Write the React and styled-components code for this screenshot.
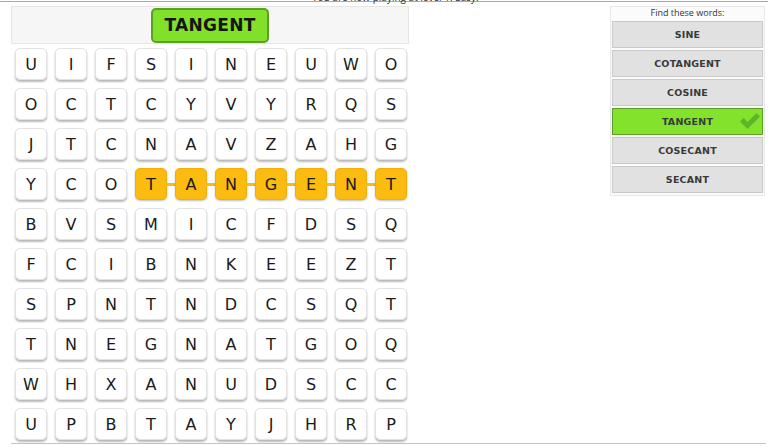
import React from "react";
import styled, { createGlobalStyle, css } from "styled-components";

const GlobalStyle = createGlobalStyle`
   html, body {
      margin: 0;
      padding: 0;
      background: #fff;
      overflow: hidden;
   }
   body {
      font-family: "Comic Sans MS", "DejaVu Sans", sans-serif;
   }
`;

const Page = styled.div`
   width: 768px;
   height: 447px;
   position: relative;
   overflow: hidden;
`;

const StatusLine = styled.div`
   margin-top: -8px;
   height: 9px;
   border-bottom: 1px solid #a9a9a9;
   font-family: "Open Sans", "DejaVu Sans", sans-serif;
   font-size: 10px;
   line-height: 10px;
   color: #333;
   padding-left: 312px;
`;

const Main = styled.div`
   display: flex;
   align-items: flex-start;
   padding: 4px 1px 0 0;
   margin: 0 2px 0 11px;
   height: 437px;
   border-bottom: 1px solid #c4c4bc;
`;

const Board = styled.div`
   width: 398px;
   display: flex;
   flex-direction: column;
`;

const Header = styled.div`
   height: 36px;
   background: #f6f6f6;
   border: 1px solid #e6e6e6;
   display: flex;
   justify-content: center;
   align-items: center;
`;

const FoundLabel = styled.div`
   width: 118px;
   height: 35px;
   box-sizing: border-box;
   background: #83e02a;
   border: 2px solid #58a122;
   border-radius: 5px;
   display: flex;
   align-items: center;
   justify-content: center;
   font-size: 17px;
   font-weight: bold;
   color: #151515;
   letter-spacing: 0.3px;
`;

const Grid = styled.div`
   display: grid;
   grid-template-columns: repeat(10, 32px);
   grid-auto-rows: 32px;
   gap: 8px;
   margin: 4px 0 0 4px;
`;

const Tile = styled.div`
   position: relative;
   box-sizing: border-box;
   border-radius: 5px;
   display: flex;
   align-items: center;
   justify-content: center;
   font-size: 16px;
   color: #1a1a1a;
   background: #fff;
   border: 1px solid #e2e2e2;
   box-shadow: 0 2px 2px rgba(0, 0, 0, 0.28);

   ${props => props.$hit && css`
      background: #fbbb10;
      border-color: #f2ad08;
      box-shadow: 0 1px 2px rgba(0, 0, 0, 0.25);
   `}

   ${props => props.$link && css`
      &::after {
         content: "";
         position: absolute;
         right: -10px;
         top: 14px;
         width: 10px;
         height: 3px;
         background: #fbbb10;
      }
   `}
`;

const Panel = styled.div`
   margin-left: auto;
   margin-top: 0;
   width: 151px;
   padding: 0 1px 2px 1px;
   background: #fbfbfb;
   border: 1px solid #e8e8e8;
   display: flex;
   flex-direction: column;
   gap: 2px;
`;

const PanelTitle = styled.div`
   font-family: "Open Sans", "DejaVu Sans", sans-serif;
   font-size: 9px;
   line-height: 12px;
   color: #333;
   text-align: center;
`;

const Word = styled.div`
   position: relative;
   height: 25px;
   background: ${props => (props.$found ? "#83e22c" : "#e1e1e1")};
   border: 1px solid ${props => (props.$found ? "#5e9e28" : "#c9c9c9")};
   display: flex;
   align-items: center;
   justify-content: center;
   font-family: "DejaVu Sans", sans-serif;
   font-size: 9.5px;
   font-weight: bold;
   color: #3a3a3a;
   letter-spacing: 0.2px;
`;

const Check = styled.svg`
   position: absolute;
   right: 1px;
   top: 3px;
   width: 22px;
   height: 18px;
`;

const rows = [
   "UIFSINEUWO",
   "OCTCYVYRQS",
   "JTCNAVZAHG",
   "YCOTANGENT",
   "BVSMICFDSQ",
   "FCIBNKEEZT",
   "SPNTNDCSQT",
   "TNEGNATGOQ",
   "WHXANUDSCC",
   "UPBTAYJHRP",
];

const words = ["SINE", "COTANGENT", "COSINE", "TANGENT", "COSECANT", "SECANT"];

export default function App() {
   return (
      <>
         <GlobalStyle />
         <Page>
            <StatusLine>You are now playing at level 1: Easy.</StatusLine>
            <Main>
               <Board>
                  <Header>
                     <FoundLabel>TANGENT</FoundLabel>
                  </Header>
                  <Grid>
                     {rows.map((row, r) =>
                        row.split("").map((ch, c) => {
                           // the found word sits on row 4, columns 4..10
                           const hit = r === 3 && c >= 3;
                           return (
                              <Tile key={`${r}-${c}`} $hit={hit} $link={hit && c < 9}>
                                 {ch}
                              </Tile>
                           );
                        })
                     )}
                  </Grid>
               </Board>
               <Panel>
                  <PanelTitle>Find these words:</PanelTitle>
                  {words.map(w => (
                     <Word key={w} $found={w === "TANGENT"}>
                        {w}
                        {w === "TANGENT" && (
                           <Check viewBox="0 0 22 18">
                              <path d="M1 9.5 L4.5 6 L8.5 10 L17.5 1 L21 4.5 L8.5 17 Z" fill="#5cb52c" />
                           </Check>
                        )}
                     </Word>
                  ))}
               </Panel>
            </Main>
         </Page>
      </>
   );
}
